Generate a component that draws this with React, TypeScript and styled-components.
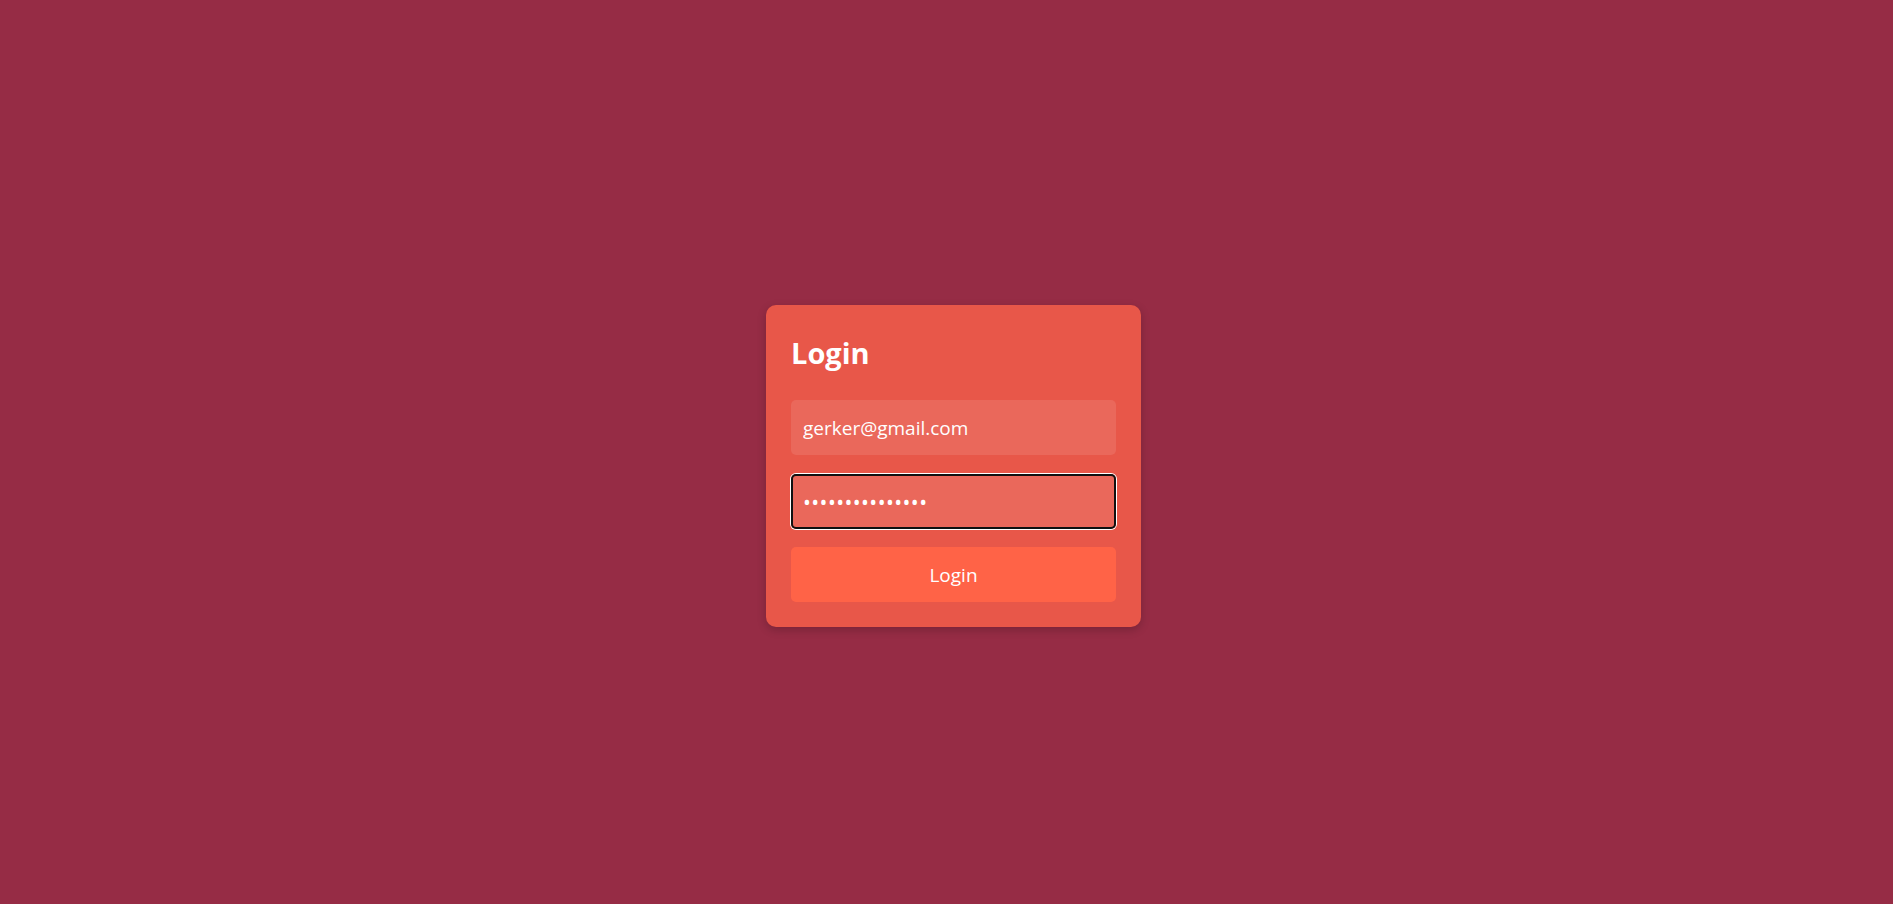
import React from "react";
import styled, { createGlobalStyle, css } from "styled-components";

const GlobalStyle = createGlobalStyle`
  * {
    box-sizing: border-box;
  }
  html,
  body {
    margin: 0;
    padding: 0;
    background: #962c45;
    font-family: "Open Sans", "Noto Sans", sans-serif;
  }
`;

const Page = styled.div`
  min-height: 100vh;
  display: flex;
  align-items: center;
  justify-content: center;
  padding: 28px 0 0 14px;
  background: #962c45;
`;

const Card = styled.form`
  width: 375px;
  padding: 25px;
  background: #e85749;
  border-radius: 10px;
  box-shadow: 0 3px 10px rgba(0, 0, 0, 0.2);
  display: flex;
  flex-direction: column;
`;

const Title = styled.h2`
  margin: 5px 0 30px;
  font-size: 29px;
  line-height: 35px;
  font-weight: 700;
  color: #ffffff;
`;

const Field = styled.input<{ $focused?: boolean }>`
  width: 100%;
  height: 55px;
  padding: 0 12px;
  margin-bottom: 19px;
  border: none;
  border-radius: 5px;
  background: rgba(255, 255, 255, 0.1);
  color: #ffffff;
  font-family: inherit;
  font-size: 19px;
  outline: none;

  &[type="password"] {
    font-size: 21px;
    letter-spacing: 0.4px;
  }

  ${({ $focused }) =>
    $focused &&
    css`
      box-shadow: 0 0 0 1px #ffffff, inset 0 0 0 2px #101010;
    `}
`;

const Submit = styled.button`
  width: 100%;
  height: 55px;
  margin-top: -1px;
  border: none;
  border-radius: 5px;
  background: #ff6347;
  color: #ffffff;
  font-family: inherit;
  font-size: 19px;
  cursor: pointer;
`;

const App: React.FC = () => {
  return (
    <>
      <GlobalStyle />
      <Page>
        <Card onSubmit={(e) => e.preventDefault()}>
          <Title>Login</Title>
          <Field type="email" defaultValue="gerker@gmail.com" />
          <Field type="password" defaultValue="123456789012345" $focused />
          <Submit type="submit">Login</Submit>
        </Card>
      </Page>
    </>
  );
};

export default App;
